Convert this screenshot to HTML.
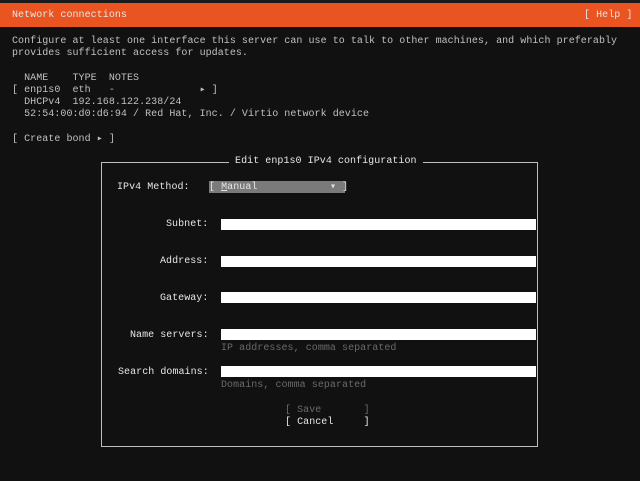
<!DOCTYPE html>
<html><head><style>
html,body{margin:0;padding:0;background:#111111;width:640px;height:481px;overflow:hidden}
body{position:relative;font-family:"Liberation Mono","DejaVu Sans Mono",monospace;font-size:10px;letter-spacing:0.05px;color:#c0c0c0}
.l{position:absolute;white-space:pre;line-height:12px;height:12px;margin-top:2px}
.bar{position:absolute;left:0;top:3px;width:640px;height:24px;background:#e95420}
.top{position:absolute;left:0;top:0;width:640px;height:3px;background:#1a1a1a}
.box{position:absolute;left:101px;top:162px;width:435px;height:283px;border:1px solid #bdbdbd}
.f{position:absolute;left:221px;width:315px;height:11px;background:#ffffff}
.dim{color:#6a6a6a}
.w{color:#e6e6e6}
</style></head><body>
<div class="top"></div>
<div class="bar"></div>
<div class="l w" style="left:12px;top:8px">Network connections</div>
<div class="l w" style="left:584px;top:8px">[ Help ]</div>
<div class="l" style="left:12px;top:34px">Configure at least one interface this server can use to talk to other machines, and which preferably</div>
<div class="l" style="left:12px;top:46px">provides sufficient access for updates.</div>
<div class="l" style="left:12px;top:71px">  NAME    TYPE  NOTES</div>
<div class="l" style="left:12px;top:83px">[ enp1s0  eth   -              ▸ ]</div>
<div class="l" style="left:12px;top:95px">  DHCPv4  192.168.122.238/24</div>
<div class="l" style="left:12px;top:107px">  52:54:00:d0:d6:94 / Red Hat, Inc. / Virtio network device</div>
<div class="l" style="left:12px;top:132px">[ Create bond ▸ ]</div>
<div class="box"></div>
<div class="l w" style="left:229px;top:154px;background:#111111"> Edit enp1s0 IPv4 configuration </div>
<div class="l w" style="left:117px;top:180px">IPv4 Method:</div>
<div style="position:absolute;left:209px;top:181px;width:136px;height:12px;background:#7a7a7a"></div>
<div class="l w" style="left:209px;top:180px">[ <u>M</u>anual            ▾ ]</div>
<div class="l w" style="left:166px;top:217px">Subnet:</div>
<div class="f" style="top:219px"></div>
<div class="l w" style="left:160px;top:254px">Address:</div>
<div class="f" style="top:256px"></div>
<div class="l w" style="left:160px;top:291px">Gateway:</div>
<div class="f" style="top:292px"></div>
<div class="l w" style="left:130px;top:328px">Name servers:</div>
<div class="f" style="top:329px"></div>
<div class="l dim" style="left:221px;top:341px">IP addresses, comma separated</div>
<div class="l w" style="left:118px;top:365px">Search domains:</div>
<div class="f" style="top:366px"></div>
<div class="l dim" style="left:221px;top:378px">Domains, comma separated</div>
<div class="l dim" style="left:285px;top:403px">[ Save       ]</div>
<div class="l w" style="left:285px;top:415px">[ Cancel     ]</div>
</body></html>
